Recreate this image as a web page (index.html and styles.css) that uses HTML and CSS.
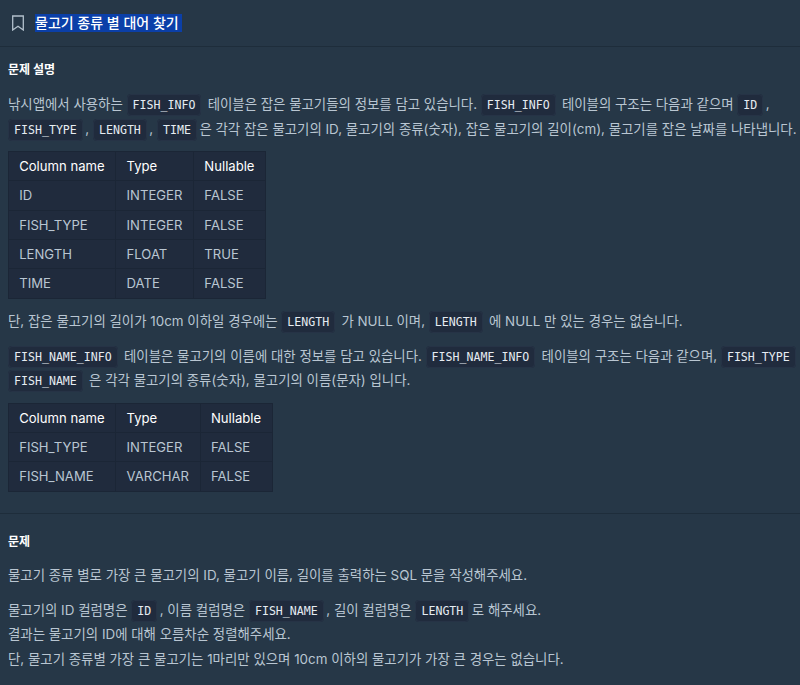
FILE: index.html
```html
<!DOCTYPE html>
<html lang="ko">
<head>
<meta charset="utf-8">
<title>물고기 종류 별 대어 찾기</title>
<link rel="stylesheet" href="styles.css">
</head>
<body>
<header class="title-bar">
  <svg class="bookmark" width="14" height="16" viewBox="0 0 14 16" fill="none" stroke="#b2c0cc" stroke-width="1.3"><path d="M1.7 1h10.6v14L7 11.2 1.7 15z"/></svg>
  <h1 class="title">물고기 종류 별 대어 찾기&nbsp;</h1>
</header>
<main class="content">
  <h2 class="heading">문제 설명</h2>
  <p class="para">낚시앱에서 사용하는 <code>FISH_INFO</code> 테이블은 잡은 물고기들의 정보를 담고 있습니다. <code>FISH_INFO</code> 테이블의 구조는 다음과 같으며 <code>ID</code>, <code>FISH_TYPE</code>, <code>LENGTH</code>, <code>TIME</code>은 각각 잡은 물고기의 ID, 물고기의 종류(숫자), 잡은 물고기의 길이(cm), 물고기를 잡은 날짜를 나타냅니다.</p>
  <table class="schema">
    <tr><th>Column name</th><th>Type</th><th>Nullable</th></tr>
    <tr><td>ID</td><td>INTEGER</td><td>FALSE</td></tr>
    <tr><td>FISH_TYPE</td><td>INTEGER</td><td>FALSE</td></tr>
    <tr><td>LENGTH</td><td>FLOAT</td><td>TRUE</td></tr>
    <tr><td>TIME</td><td>DATE</td><td>FALSE</td></tr>
  </table>
  <p class="para">단, 잡은 물고기의 길이가 10cm 이하일 경우에는 <code>LENGTH</code> 가 NULL 이며, <code>LENGTH</code> 에 NULL 만 있는 경우는 없습니다.</p>
  <p class="para"><code>FISH_NAME_INFO</code> 테이블은 물고기의 이름에 대한 정보를 담고 있습니다. <code>FISH_NAME_INFO</code> 테이블의 구조는 다음과 같으며, <code>FISH_TYPE</code> <code>FISH_NAME</code> 은 각각 물고기의 종류(숫자), 물고기의 이름(문자) 입니다.</p>
  <table class="schema">
    <tr><th>Column name</th><th>Type</th><th>Nullable</th></tr>
    <tr><td>FISH_TYPE</td><td>INTEGER</td><td>FALSE</td></tr>
    <tr><td>FISH_NAME</td><td>VARCHAR</td><td>FALSE</td></tr>
  </table>
  <hr class="rule">
  <h2 class="heading">문제</h2>
  <p class="para">물고기 종류 별로 가장 큰 물고기의 ID, 물고기 이름, 길이를 출력하는 SQL 문을 작성해주세요.</p>
  <p class="para">물고기의 ID 컬럼명은 <code>ID</code>, 이름 컬럼명은 <code>FISH_NAME</code>, 길이 컬럼명은 <code>LENGTH</code>로 해주세요.<br>결과는 물고기의 ID에 대해 오름차순 정렬해주세요.<br>단, 물고기 종류별 가장 큰 물고기는 1마리만 있으며 10cm 이하의 물고기가 가장 큰 경우는 없습니다.</p>
</main>
</body>
</html>
```
FILE: styles.css
```css
* { box-sizing: border-box; }
html, body { margin: 0; height: 685px; overflow: hidden; }
body {
  background: #263747;
  color: #b9c6d2;
  font-family: Inter, "Noto Sans CJK KR", sans-serif;
  font-size: 13.42px;
  line-height: 24.5px;
}
.title-bar {
  display: flex;
  align-items: center;
  gap: 10px;
  height: 47px;
  padding-left: 11px;
  border-bottom: 1px solid #1e2d3b;
}
.bookmark { flex: none; }
.title {
  margin: 0;
  background: #0b3fa8;
  color: #fff;
  font-size: 14px;
  font-weight: 500;
  line-height: 18px;
}
.content { padding: 11px 0 0 8px; }
.heading {
  margin: 0 0 9px;
  color: #fff;
  font-size: 12px;
  font-weight: 700;
  line-height: 24.5px;
}
.heading:first-child { margin-bottom: 9.5px; }
.para { margin: 0 0 10.2px; }
code {
  font-family: "DejaVu Sans Mono", monospace;
  font-size: 11.6px;
  line-height: 1;
  color: #e6ecf2;
  background: #202b3d;
  border: 1px solid #263346;
  border-radius: 4px;
  padding: 3px 5px;
  margin-right: 2.5px;
}
.schema {
  border-collapse: collapse;
  background: #202b3d;
  margin: 0 0 10.2px;
  font-size: 13.1px;
}
.schema th, .schema td {
  border: 1px solid #1b2636;
  height: 29.3px;
  padding: 0 10.8px 0 10.2px;
  text-align: left;
  font-weight: 400;
  white-space: nowrap;
}
.schema th { color: #fff; }
.rule {
  border: 0;
  border-top: 1px solid #1e2d3b;
  margin: 21px 0 16px -8px;
}
```
